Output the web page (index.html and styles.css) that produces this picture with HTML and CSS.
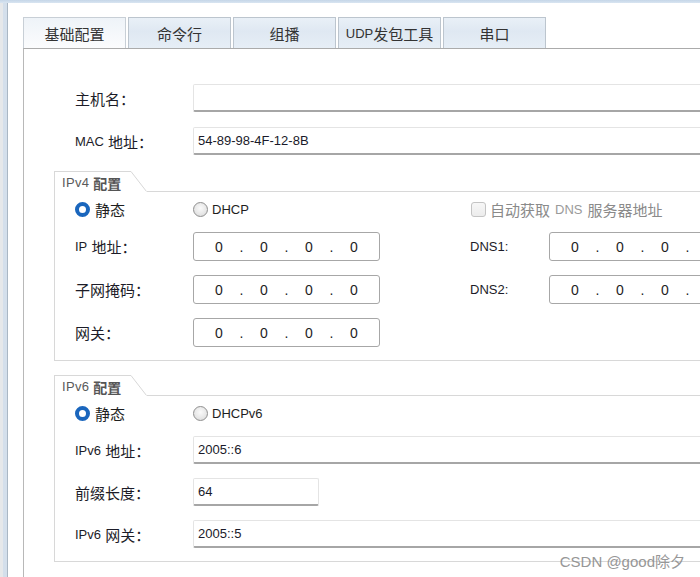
FILE: index.html
```html
<!DOCTYPE html>
<html lang="zh">
<head>
<meta charset="utf-8">
<title>基础配置</title>
<link rel="stylesheet" href="styles.css">
</head>
<body>
<div class="window">
  <div class="topband"></div>
  <div class="frame">
    <div class="leftbar"></div>
    <div class="main">
      <div class="tabs">
        <div class="tab active">基础配置</div>
        <div class="tab">命令行</div>
        <div class="tab">组播</div>
        <div class="tab"><span class="lat">UDP</span>发包工具</div>
        <div class="tab">串口</div>
      </div>
      <div class="panel">
        <div class="form">
          <div class="label">主机名：</div>
          <div class="text"></div>
          <div class="label"><span class="lat">MAC</span>&nbsp;地址：</div>
          <div class="text">54-89-98-4F-12-8B</div>
        </div>

        <div class="group">
          <div class="ghead">
            <div class="gtab"><span class="gl">IPv4</span> 配置</div>
            <svg class="gslant" width="16" height="21" viewBox="0 0 16 21"><line x1="0" y1="0.5" x2="15.5" y2="20.5" stroke="#d8d8d8" stroke-width="1"/></svg>
            <div class="gline"></div>
          </div>
          <div class="gbody v4">
            <div class="opt"><span class="radio on"></span>静态</div>
            <div class="opt"><span class="radio"></span><span class="lat">DHCP</span></div>
            <div></div>
            <div class="opt check span2"><span class="cbox"></span>自动获取 <span class="lat">DNS</span> 服务器地址</div>

            <div class="label"><span class="lat">IP</span>&nbsp;地址：</div>
            <div class="ip"><span>0</span><i>.</i><span>0</span><i>.</i><span>0</span><i>.</i><span>0</span></div>
            <div></div>
            <div class="label"><span class="lat">DNS1:</span></div>
            <div class="ip"><span>0</span><i>.</i><span>0</span><i>.</i><span>0</span><i>.</i><span>0</span></div>

            <div class="label">子网掩码：</div>
            <div class="ip"><span>0</span><i>.</i><span>0</span><i>.</i><span>0</span><i>.</i><span>0</span></div>
            <div></div>
            <div class="label"><span class="lat">DNS2:</span></div>
            <div class="ip"><span>0</span><i>.</i><span>0</span><i>.</i><span>0</span><i>.</i><span>0</span></div>

            <div class="label">网关：</div>
            <div class="ip"><span>0</span><i>.</i><span>0</span><i>.</i><span>0</span><i>.</i><span>0</span></div>
          </div>
        </div>

        <div class="group g6">
          <div class="ghead">
            <div class="gtab"><span class="gl">IPv6</span> 配置</div>
            <svg class="gslant" width="16" height="21" viewBox="0 0 16 21"><line x1="0" y1="0.5" x2="15.5" y2="20.5" stroke="#d8d8d8" stroke-width="1"/></svg>
            <div class="gline"></div>
          </div>
          <div class="gbody v6">
            <div class="opt"><span class="radio on"></span>静态</div>
            <div class="opt"><span class="radio"></span><span class="lat">DHCPv6</span></div>

            <div class="label"><span class="lat">IPv6</span>&nbsp;地址：</div>
            <div class="text">2005::6</div>

            <div class="label">前缀长度：</div>
            <div class="text short">64</div>

            <div class="label"><span class="lat">IPv6</span>&nbsp;网关：</div>
            <div class="text">2005::5</div>
          </div>
        </div>
      </div>
    </div>
  </div>
  <div class="watermark">CSDN @good除夕</div>
</div>
</body>
</html>
```
FILE: styles.css
```css
html, body {
  margin: 0;
  padding: 0;
  width: 700px;
  height: 577px;
  overflow: hidden;
  background: #ffffff;
}

.window {
  position: relative;
  width: 700px;
  height: 577px;
  overflow: hidden;
  font-family: "Liberation Sans", "Noto Sans CJK SC", sans-serif;
  font-size: 15px;
  color: #1e1e1e;
}

.topband {
  height: 3px;
  background: linear-gradient(to bottom, #c5d6e8, #d9e5f1);
}

.frame {
  display: flex;
  height: 574px;
}

.leftbar {
  width: 8px;
  flex: none;
  background: linear-gradient(to right, #e6e8ea 0 3px, #d4dfeb 3px 7px, #aab7c4 7px 8px);
}

.main {
  flex: none;
  width: 760px;
  padding: 14px 0 0 15px;
  display: flex;
  flex-direction: column;
}

.tabs {
  display: flex;
  gap: 2px;
  height: 31px;
}

.tab {
  box-sizing: border-box;
  width: 103px;
  height: 31px;
  border: 1px solid #bcc5ce;
  border-bottom: none;
  background: linear-gradient(to bottom, #e9f0f7 0%, #dfe8f2 45%, #e6eef6 100%);
  display: flex;
  align-items: center;
  justify-content: center;
  font-size: 15px;
  color: #333;
  padding-top: 1px;
  white-space: nowrap;
}

.tab .lat {
  font-size: 13px;
}

.tab.active {
  background: linear-gradient(to bottom, #eef3f8 0%, #f6f8fb 60%, #fbfcfd 100%);
  border-color: #c8cfd6;
}

.panel {
  flex: 1;
  border-top: 1px solid #ababab;
  border-left: 1px solid #b8b8b8;
  padding: 35px 0 0 0;
}

.form {
  display: grid;
  grid-template-columns: 118px 560px;
  grid-auto-rows: 28px;
  row-gap: 15px;
  padding-left: 51px;
}

.label {
  display: flex;
  align-items: center;
  font-size: 15px;
  color: #1c1c28;
  white-space: nowrap;
}

.lat {
  font-size: 13px;
}

.text {
  box-sizing: border-box;
  height: 28px;
  border: 1px solid #e4e4e4;
  border-bottom: 2px solid #a6a6a6;
  border-radius: 2px;
  background: #fff;
  display: flex;
  align-items: center;
  padding: 0 0 0 4px;
  font-size: 13px;
  color: #1a1a2a;
}

.text.short {
  width: 126px;
}

.group {
  margin: 16px 0 0 30px;
}

.group.g6 {
  margin-top: 14px;
}

.ghead {
  display: flex;
  height: 21px;
}

.gtab {
  box-sizing: border-box;
  height: 21px;
  border-top: 1px solid #d8d8d8;
  border-left: 1px solid #d8d8d8;
  padding: 1px 10px 0 7px;
  font-size: 14px;
  font-weight: bold;
  color: #555;
  display: flex;
  align-items: center;
  gap: 4px;
  white-space: nowrap;
}

.gl {
  font-weight: normal;
  font-size: 13px;
  letter-spacing: 0.3px;
  color: #5a5a5a;
}

.gslant {
  display: block;
  flex: none;
}

.gline {
  flex: 1;
  border-bottom: 1px solid #d8d8d8;
}

.gbody {
  border-left: 1px solid #d8d8d8;
  border-bottom: 1px solid #d8d8d8;
  display: grid;
  row-gap: 14px;
  padding: 8px 0 13px 20px;
}

.gbody.v4 {
  grid-template-columns: 118px 187px 90px 79px 200px;
  grid-template-rows: 18px 29px 29px 29px;
}

.gbody.v6 {
  grid-template-columns: 118px 560px;
  grid-template-rows: 18px 28px 28px 28px;
}

.span2 {
  grid-column: span 2;
}

.opt {
  display: flex;
  align-items: center;
  gap: 5px;
  font-size: 15px;
  color: #1e1e1e;
  white-space: nowrap;
}

.opt .lat {
  margin-left: -1px;
}

.radio {
  box-sizing: border-box;
  width: 15px;
  height: 15px;
  border-radius: 50%;
  border: 1px solid #8f8f8f;
  background: radial-gradient(circle at 50% 40%, #fafafa 0%, #e8e8e8 55%, #d6d6d6 100%);
  flex: none;
}

.radio.on {
  border: 4px solid #1a66bd;
  background: #fff;
}

.check {
  color: #8a8a8a;
  gap: 4px;
  margin-left: 1px;
}

.check .lat {
  margin: 0 1px;
  color: #9a9a9a;
}

.cbox {
  box-sizing: border-box;
  width: 15px;
  height: 15px;
  border: 1px solid #c4c4c4;
  border-radius: 3px;
  background: linear-gradient(to bottom, #f7f7f7, #ececec);
  flex: none;
}

.ip {
  box-sizing: border-box;
  height: 29px;
  border: 1px solid #a7a7a7;
  border-radius: 3px;
  background: #fff;
  display: flex;
  align-items: center;
  padding-left: 13px;
  font-size: 14px;
  color: #1e1e1e;
}

.ip span {
  width: 24px;
  text-align: center;
}

.ip i {
  font-style: normal;
  width: 21px;
  text-align: center;
  color: #222;
}

.watermark {
  position: absolute;
  right: 15px;
  bottom: 6px;
  font-family: "Liberation Sans", "Noto Sans CJK SC", sans-serif;
  font-size: 15px;
  color: #8c8c8c;
  opacity: 0.9;
}
```
